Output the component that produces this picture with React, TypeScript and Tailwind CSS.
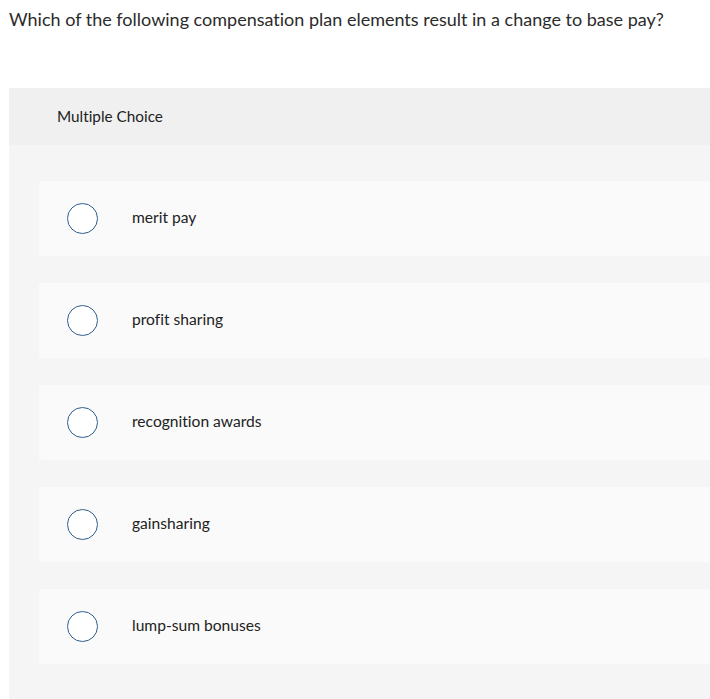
import React from "react";

const options = ["merit pay", "profit sharing", "recognition awards", "gainsharing", "lump-sum bonuses"];

export default function App() {
  return (
    <div className="w-[710px] h-[699px] overflow-hidden bg-white font-['Lato','Open_Sans',sans-serif] [font-variant-ligatures:none]">
      <div className="pl-[9px] pt-[7px] h-[88px] text-[18px] leading-[24px] text-[#2b2b2b] whitespace-nowrap">
        Which of the following compensation plan elements result in a change to base pay?
      </div>
      <div className="ml-[9px] bg-[#f5f5f5] h-[700px] text-[#222]">
        <div className="h-[57px] bg-[#f0f0f0] flex items-center pl-[48px] text-[15.3px]">Multiple Choice</div>
        <div className="pt-[36px] pl-[30px] flex flex-col gap-[27.5px]">
          {options.map((o) => (
            <div key={o} className="h-[74.5px] bg-[#fafafa] rounded-l-[3px] flex items-center">
              <div className="ml-[28px] w-[31px] h-[31px] rounded-full border-[1.5px] border-[#2f5f8e] bg-white" />
              <div className="ml-[34px] text-[15.6px] pb-[2px]">{o}</div>
            </div>
          ))}
        </div>
      </div>
    </div>
  );
}
